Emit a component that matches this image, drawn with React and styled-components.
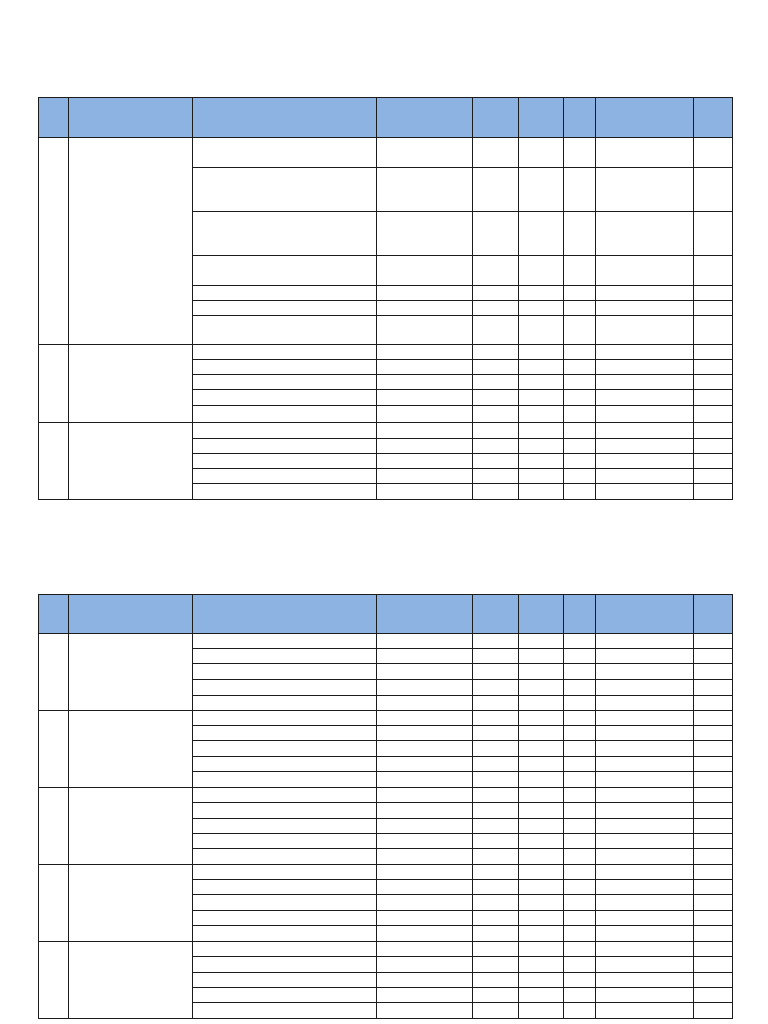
import React from "react";
import styled, { createGlobalStyle } from "styled-components";

const GlobalStyle = createGlobalStyle`
  html, body {
    margin: 0;
    padding: 0;
    background: #ffffff;
    font-family: "Liberation Sans", Arial, sans-serif;
  }
`;

// line-to-line widths of the nine columns
const columns = [30, 124, 184, 96, 46, 45, 32, 98, 39];

// row heights measured line to line
const firstSheet = {
  header: 40,
  groups: [
    [30, 44, 44, 30, 15, 15, 29],
    [15, 15, 15, 16, 17],
    [16, 15, 15, 15, 16],
  ],
};

const secondSheet = {
  header: 39,
  groups: [
    [15, 15, 16, 16, 15],
    [15, 15, 16, 15, 16],
    [15, 16, 15, 15, 16],
    [15, 15, 16, 15, 16],
    [15, 16, 15, 15, 16],
  ],
};

const Page = styled.div`
  padding: 97px 0 0 38px;
  display: flex;
  flex-direction: column;
  gap: 94px;
`;

const Table = styled.table`
  border-collapse: collapse;
  table-layout: fixed;
  width: ${columns.reduce((a, b) => a + b, 0) + 1}px;
  border: 1px solid #3a3a3a;
`;

// collapsed borders add one pixel to each row, hence the -1
const HeadCell = styled.th`
  background: #8db3e2;
  border: 1px solid #1c1c1c;
  padding: 0;
  height: ${(p) => p.$h - 1}px;
`;

const Cell = styled.td`
  border: 1px solid #1c1c1c;
  padding: 0;
  height: ${(p) => p.$h - 1}px;
  background: #ffffff;
`;

function Sheet({ header, groups }) {
  return (
    <Table>
      <colgroup>
        {columns.map((w, i) => (
          <col key={i} style={{ width: w }} />
        ))}
      </colgroup>
      <thead>
        <tr>
          {columns.map((_, i) => (
            <HeadCell key={i} $h={header} />
          ))}
        </tr>
      </thead>
      <tbody>
        {groups.map((rows, g) =>
          rows.map((h, r) => (
            <tr key={`${g}-${r}`}>
              {r === 0 && (
                <>
                  <Cell rowSpan={rows.length} $h={1} />
                  <Cell rowSpan={rows.length} $h={1} />
                </>
              )}
              {columns.slice(2).map((_, c) => (
                <Cell key={c} $h={h} />
              ))}
            </tr>
          ))
        )}
      </tbody>
    </Table>
  );
}

export default function App() {
  return (
    <>
      <GlobalStyle />
      <Page>
        <Sheet {...firstSheet} />
        <Sheet {...secondSheet} />
      </Page>
    </>
  );
}
